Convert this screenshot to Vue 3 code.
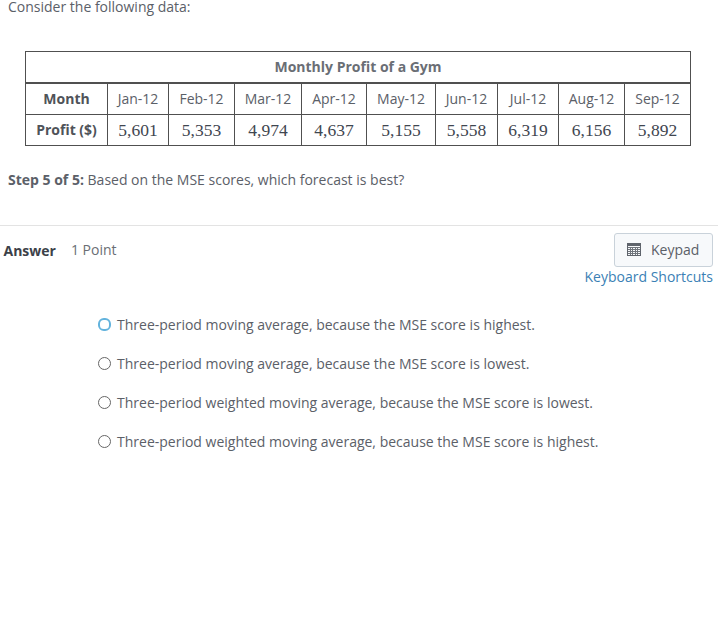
<script setup>
const months = ['Jan-12','Feb-12','Mar-12','Apr-12','May-12','Jun-12','Jul-12','Aug-12','Sep-12']
const profits = ['5,601','5,353','4,974','4,637','5,155','5,558','6,319','6,156','5,892']
const widths = [82,61,66,67,65,69,62,61,66,66]
const options = [
  'Three-period moving average, because the MSE score is highest.',
  'Three-period moving average, because the MSE score is lowest.',
  'Three-period weighted moving average, because the MSE score is lowest.',
  'Three-period weighted moving average, because the MSE score is highest.'
]
</script>

<template>
  <div class="page">
    <section class="question">
      <p class="intro">Consider the following data:</p>
      <table class="data">
        <colgroup>
          <col v-for="(w, i) in widths" :key="i" :style="{ width: w + 'px' }" />
        </colgroup>
        <tbody>
          <tr class="title-row"><th colspan="10">Monthly Profit of a Gym</th></tr>
          <tr>
            <th>Month</th>
            <td v-for="m in months" :key="m">{{ m }}</td>
          </tr>
          <tr>
            <th>Profit ($)</th>
            <td v-for="p in profits" :key="p" class="num">{{ p }}</td>
          </tr>
        </tbody>
      </table>
      <p class="step"><strong>Step 5 of 5:</strong> Based on the MSE scores, which forecast is best?</p>
    </section>

    <section class="answer">
      <div class="answer-head">
        <div class="answer-label"><strong>Answer</strong><span class="points">1 Point</span></div>
        <div class="tools">
          <button class="keypad" type="button">
            <svg width="14" height="13" viewBox="0 0 14 13" aria-hidden="true">
              <rect x="0.5" y="0.5" width="13" height="12" fill="none" stroke="#5f646c" />
              <rect x="1" y="1" width="12" height="2" fill="#5f646c" />
              <path d="M1 4.5h12M1 6.5h12M1 8.5h12M1 10.5h12M3.5 4V12M5.5 4V12M8.5 4V12M10.5 4V12" stroke="#70757c" stroke-width="1" fill="none" />
            </svg>
            <span>Keypad</span>
          </button>
          <a class="shortcuts">Keyboard Shortcuts</a>
        </div>
      </div>
      <ul class="options">
        <li v-for="(o, i) in options" :key="o">
          <span class="radio" :class="{ focus: i === 0 }"></span>
          <span>{{ o }}</span>
        </li>
      </ul>
    </section>
  </div>
</template>

<style>
html, body { margin: 0; background: #fff; }
</style>

<style scoped>
.page {
  width: 718px;
  height: 628px;
  overflow: hidden;
  font-family: "Open Sans", sans-serif;
  font-size: 14px;
  color: #5b6068;
}
.question { padding: 0 0 0 8px; }
.intro { margin: 0; line-height: 14px; }
.data {
  border-collapse: collapse;
  table-layout: fixed;
  width: 665px;
  margin: 37px 0 0 16.5px;
  color: #5b6068;
}
.data th, .data td {
  border: 1px solid #505050;
  padding: 0 0 0 1px;
  height: 30px;
  text-align: center;
  line-height: 20px;
}
.data th { font-weight: 700; color: #4f5359; }
.title-row th { height: 30px; border-bottom: 2px solid #505050; color: #6a6e75; }
.data td.num {
  font-family: "Liberation Serif", serif;
  font-size: 17.5px;
  color: #3f4650;
}
.step { margin: 24px 0 0; line-height: 20px; }
.step strong { color: #5b6068; }
.answer {
  margin-top: 35px;
  border-top: 1px solid #e3e3e3;
  padding: 7px 5px 0 3.5px;
}
.answer-head { display: flex; justify-content: space-between; align-items: flex-start; }
.answer-label { margin-top: 8px; line-height: 20px; display: flex; gap: 15px; }
.answer-label strong { color: #3c4149; }
.points { color: #6a6e75; margin-top: -1px; }
.tools { display: flex; flex-direction: column; align-items: flex-end; }
.keypad {
  display: flex;
  align-items: center;
  gap: 10px;
  width: 99px;
  height: 34px;
  padding: 0 0 1px 12px;
  border: 1px solid #c9d2da;
  border-radius: 3px;
  background: #f7f9fb;
  font: inherit;
  color: #5b6068;
}
.shortcuts { margin-top: 0; line-height: 20px; color: #3b7fb5; }
.options { list-style: none; margin: 27px 0 0 94.5px; padding: 0; }
.options li {
  display: flex;
  align-items: center;
  gap: 6px;
  height: 20px;
  margin-bottom: 19px;
}
.radio {
  width: 11px;
  height: 11px;
  border: 1px solid #666;
  border-radius: 50%;
  flex: none;
}
.radio.focus {
  border: 2px solid #63b3dd;
  width: 9px;
  height: 9px;
  border-radius: 45%;
}
</style>
